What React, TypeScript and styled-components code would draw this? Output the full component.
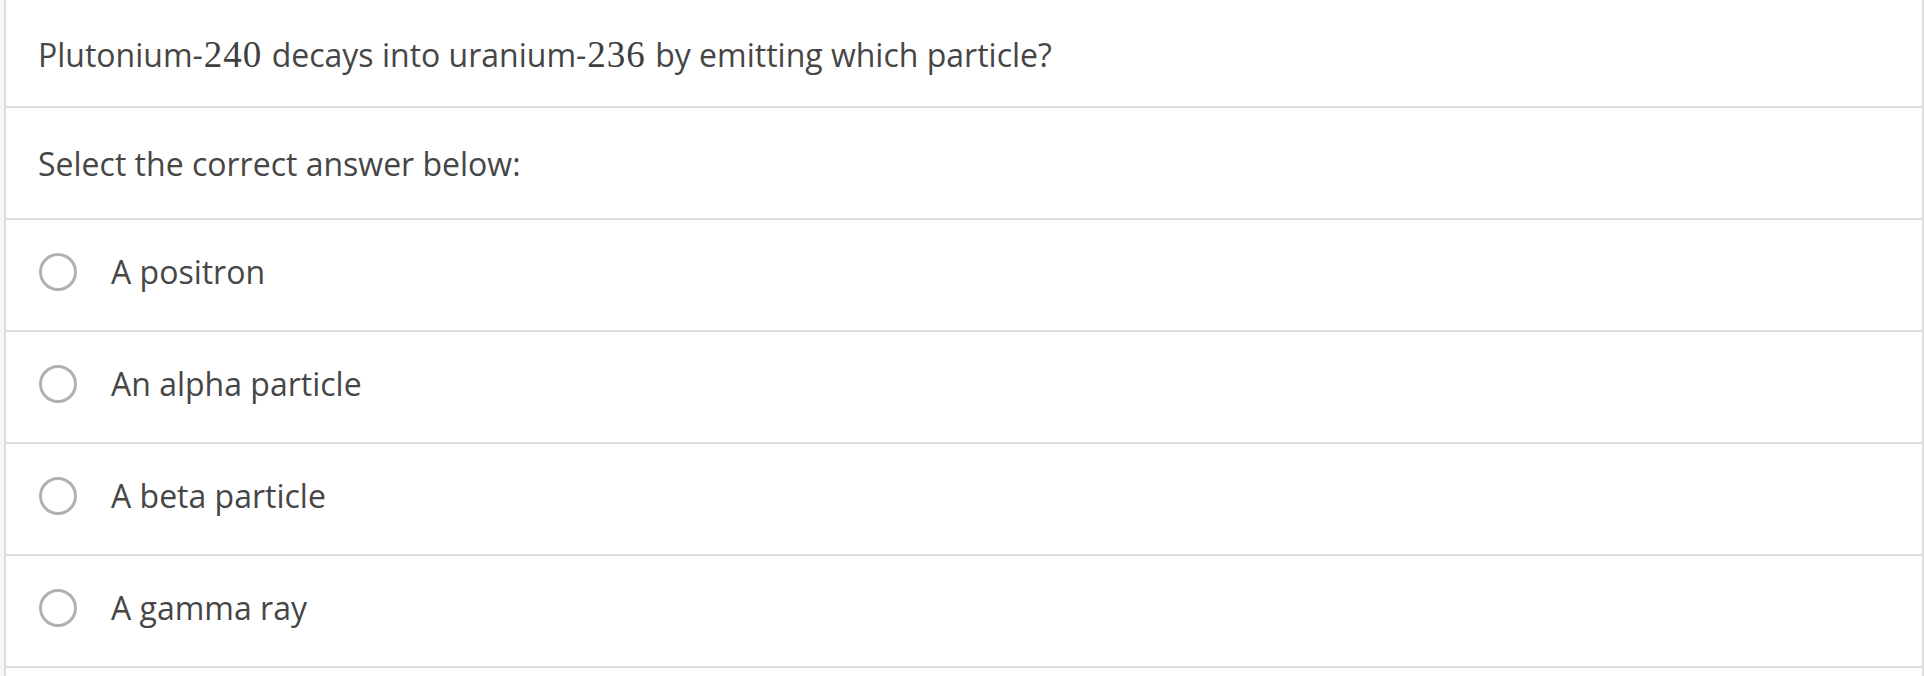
import React from 'react';
import styled, { createGlobalStyle } from 'styled-components';

const GlobalStyle = createGlobalStyle`
	html, body {
		margin: 0;
		padding: 0;
		background: #f7f7f7;
	}
	body {
		font-family: 'Open Sans', 'Liberation Sans', sans-serif;
		color: #464646;
	}
`;

const answers = ['A positron', 'An alpha particle', 'A beta particle', 'A gamma ray'];

const App = () => {
	return (
		<>
			<GlobalStyle />
			<QuestionCard>
				<QuestionRow>
					<QuestionText>
						Plutonium-<MathNum>240</MathNum> decays into uranium-<MathNum>236</MathNum> by emitting which
						particle?
					</QuestionText>
				</QuestionRow>
				<PromptRow>
					<QuestionText>Select the correct answer below:</QuestionText>
				</PromptRow>
				{answers.map((answer) => (
					<AnswerRow key={answer}>
						<Radio />
						<AnswerText>{answer}</AnswerText>
					</AnswerRow>
				))}
				<CardFooter />
			</QuestionCard>
		</>
	);
};

export default App;

const QuestionCard = styled.div`
	margin-left: 4px;
	background: #fff;
	border-left: 2px solid #dcdcdc;
	border-right: 2px solid #dcdcdc;
`;

const Row = styled.div`
	display: flex;
	align-items: center;
	box-sizing: border-box;
	border-bottom: 2px solid #dcdcdc;
	padding: 0 32px;
`;

const QuestionRow = styled(Row)`
	height: 108px;
	padding-top: 4px;
`;

const PromptRow = styled(Row)`
	height: 112px;
	padding-top: 2px;
`;

const AnswerRow = styled(Row)`
	height: 112px;
	padding-bottom: 6px;
	gap: 34px;
	cursor: pointer;
`;

const CardFooter = styled.div`
	height: 8px;
`;

const QuestionText = styled.div`
	font-size: 32px;
	line-height: 42px;
`;

const MathNum = styled.span`
	font-family: 'Liberation Serif', 'Times New Roman', serif;
	font-size: 37px;
	letter-spacing: 1px;
	padding: 0 1px;
	color: #3e3e3e;
`;

const Radio = styled.span`
	display: block;
	box-sizing: border-box;
	width: 38px;
	height: 38px;
	border-radius: 50%;
	border: 3px solid #b1b1b1;
	flex-shrink: 0;
	margin-left: 1px;
`;

const AnswerText = styled.span`
	font-size: 32px;
	line-height: 42px;
`;
